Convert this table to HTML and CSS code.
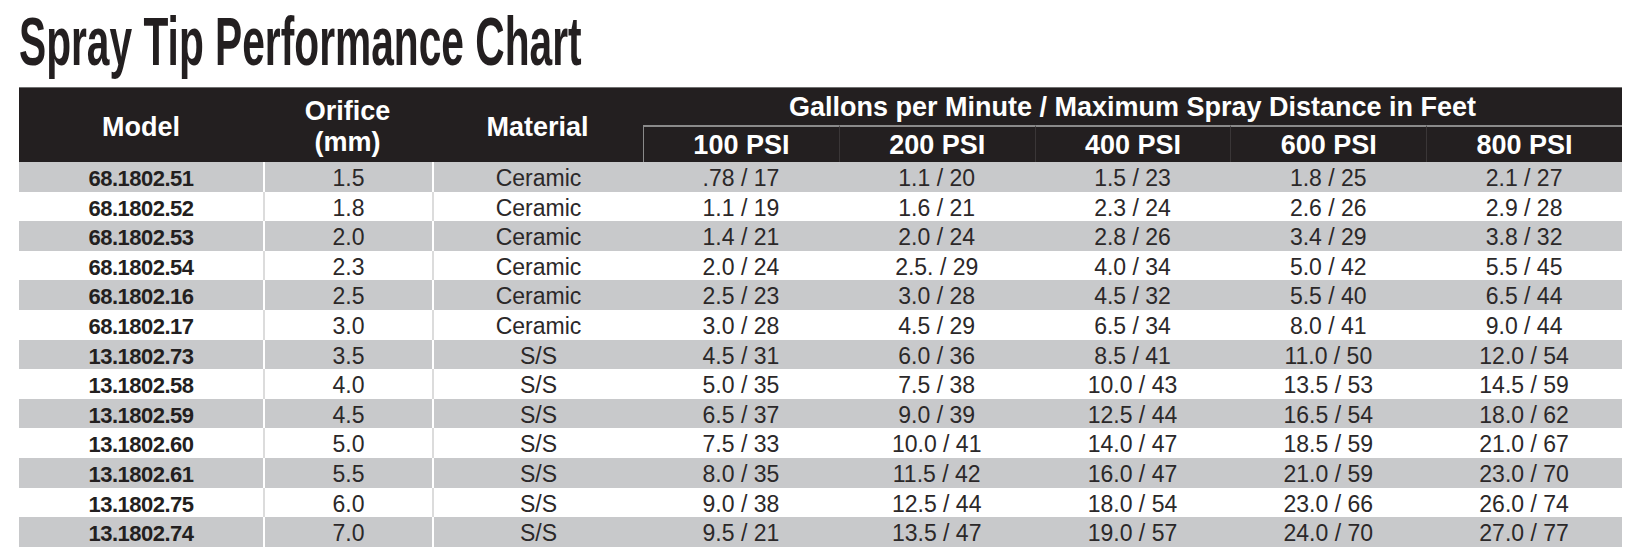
FILE: index.html
```html
<!DOCTYPE html>
<html lang="en">
<head>
<meta charset="utf-8">
<title>Spray Tip Performance Chart</title>
<link rel="stylesheet" href="styles.css">
</head>
<body>
<div class="page">
  <h1 class="title">Spray Tip Performance Chart</h1>
  <div class="chart">
    <div class="head">
      <div class="h h-model">Model</div>
      <div class="h h-orifice">Orifice<br>(mm)</div>
      <div class="h h-material">Material</div>
      <div class="h h-group">Gallons per Minute / Maximum Spray Distance in Feet</div>
      <div class="h psi first">100 PSI</div>
      <div class="h psi">200 PSI</div>
      <div class="h psi">400 PSI</div>
      <div class="h psi">600 PSI</div>
      <div class="h psi">800 PSI</div>
    </div>
    <div class="row shade"><div class="c model">68.1802.51</div><div class="c sep">1.5</div><div class="c sep">Ceramic</div><div class="c">.78 / 17</div><div class="c">1.1 / 20</div><div class="c">1.5 / 23</div><div class="c">1.8 / 25</div><div class="c">2.1 / 27</div></div>
    <div class="row"><div class="c model">68.1802.52</div><div class="c sep">1.8</div><div class="c sep">Ceramic</div><div class="c">1.1 / 19</div><div class="c">1.6 / 21</div><div class="c">2.3 / 24</div><div class="c">2.6 / 26</div><div class="c">2.9 / 28</div></div>
    <div class="row shade"><div class="c model">68.1802.53</div><div class="c sep">2.0</div><div class="c sep">Ceramic</div><div class="c">1.4 / 21</div><div class="c">2.0 / 24</div><div class="c">2.8 / 26</div><div class="c">3.4 / 29</div><div class="c">3.8 / 32</div></div>
    <div class="row"><div class="c model">68.1802.54</div><div class="c sep">2.3</div><div class="c sep">Ceramic</div><div class="c">2.0 / 24</div><div class="c">2.5. / 29</div><div class="c">4.0 / 34</div><div class="c">5.0 / 42</div><div class="c">5.5 / 45</div></div>
    <div class="row shade"><div class="c model">68.1802.16</div><div class="c sep">2.5</div><div class="c sep">Ceramic</div><div class="c">2.5 / 23</div><div class="c">3.0 / 28</div><div class="c">4.5 / 32</div><div class="c">5.5 / 40</div><div class="c">6.5 / 44</div></div>
    <div class="row"><div class="c model">68.1802.17</div><div class="c sep">3.0</div><div class="c sep">Ceramic</div><div class="c">3.0 / 28</div><div class="c">4.5 / 29</div><div class="c">6.5 / 34</div><div class="c">8.0 / 41</div><div class="c">9.0 / 44</div></div>
    <div class="row shade"><div class="c model">13.1802.73</div><div class="c sep">3.5</div><div class="c sep">S/S</div><div class="c">4.5 / 31</div><div class="c">6.0 / 36</div><div class="c">8.5 / 41</div><div class="c">11.0 / 50</div><div class="c">12.0 / 54</div></div>
    <div class="row"><div class="c model">13.1802.58</div><div class="c sep">4.0</div><div class="c sep">S/S</div><div class="c">5.0 / 35</div><div class="c">7.5 / 38</div><div class="c">10.0 / 43</div><div class="c">13.5 / 53</div><div class="c">14.5 / 59</div></div>
    <div class="row shade"><div class="c model">13.1802.59</div><div class="c sep">4.5</div><div class="c sep">S/S</div><div class="c">6.5 / 37</div><div class="c">9.0 / 39</div><div class="c">12.5 / 44</div><div class="c">16.5 / 54</div><div class="c">18.0 / 62</div></div>
    <div class="row"><div class="c model">13.1802.60</div><div class="c sep">5.0</div><div class="c sep">S/S</div><div class="c">7.5 / 33</div><div class="c">10.0 / 41</div><div class="c">14.0 / 47</div><div class="c">18.5 / 59</div><div class="c">21.0 / 67</div></div>
    <div class="row shade"><div class="c model">13.1802.61</div><div class="c sep">5.5</div><div class="c sep">S/S</div><div class="c">8.0 / 35</div><div class="c">11.5 / 42</div><div class="c">16.0 / 47</div><div class="c">21.0 / 59</div><div class="c">23.0 / 70</div></div>
    <div class="row"><div class="c model">13.1802.75</div><div class="c sep">6.0</div><div class="c sep">S/S</div><div class="c">9.0 / 38</div><div class="c">12.5 / 44</div><div class="c">18.0 / 54</div><div class="c">23.0 / 66</div><div class="c">26.0 / 74</div></div>
    <div class="row shade"><div class="c model">13.1802.74</div><div class="c sep">7.0</div><div class="c sep">S/S</div><div class="c">9.5 / 21</div><div class="c">13.5 / 47</div><div class="c">19.0 / 57</div><div class="c">24.0 / 70</div><div class="c">27.0 / 77</div></div>
  </div>
</div>
</body>
</html>
```
FILE: styles.css
```css
* { box-sizing: border-box; }

html, body {
  margin: 0;
  padding: 0;
  background: #ffffff;
}

.page {
  padding: 8px 0 0 19px;
  color: #231f20;
  font-family: "Liberation Sans", Arial, sans-serif;
}

.title {
  margin: 0 0 11px 0;
  font: 700 69px/68px "Liberation Sans", Arial, sans-serif;
  color: #231f20;
  white-space: nowrap;
  transform: scaleX(0.59);
  transform-origin: left center;
}

.chart {
  width: 1603px;
}

.head {
  display: grid;
  grid-template-columns: 244px 169px 211px repeat(5, 1fr);
  grid-template-rows: 37px 37px;
  background: #231f20;
  border-top: 1px solid #707070;
  color: #ffffff;
}

.h {
  font-weight: 700;
  font-size: 27px;
  text-align: center;
  white-space: nowrap;
}

.h-model,
.h-material {
  grid-row: 1 / 3;
  display: flex;
  align-items: center;
  justify-content: center;
  padding-top: 4px;
}

.h-orifice {
  grid-row: 1 / 3;
  display: flex;
  align-items: center;
  justify-content: center;
  line-height: 31px;
  padding-top: 3px;
}

.h-group {
  grid-column: 4 / 9;
  line-height: 37px;
  padding-top: 1px;
}

.psi {
  border-top: 2px solid #8a8a8a;
  border-left: 1px solid #3a3637;
  line-height: 35px;
  padding-top: 1px;
}

.psi.first {
  border-left: 1px solid #8a8a8a;
}

.row {
  display: grid;
  grid-template-columns: 244px 169px 211px repeat(5, 1fr);
  height: 29.6px;
  background: #ffffff;
}

.row.shade {
  background: #c8c9cb;
}

.c {
  text-align: center;
  font-size: 23px;
  line-height: 27.6px;
  padding-top: 3px;
  color: #2b2829;
  white-space: nowrap;
}

.c.model {
  font-size: 22px;
  font-weight: 700;
  letter-spacing: -0.5px;
  color: #231f20;
}

.c.sep {
  border-left: 2px solid #dcdcdc;
}

.row.shade .c.sep {
  border-left-color: #ffffff;
}
```
